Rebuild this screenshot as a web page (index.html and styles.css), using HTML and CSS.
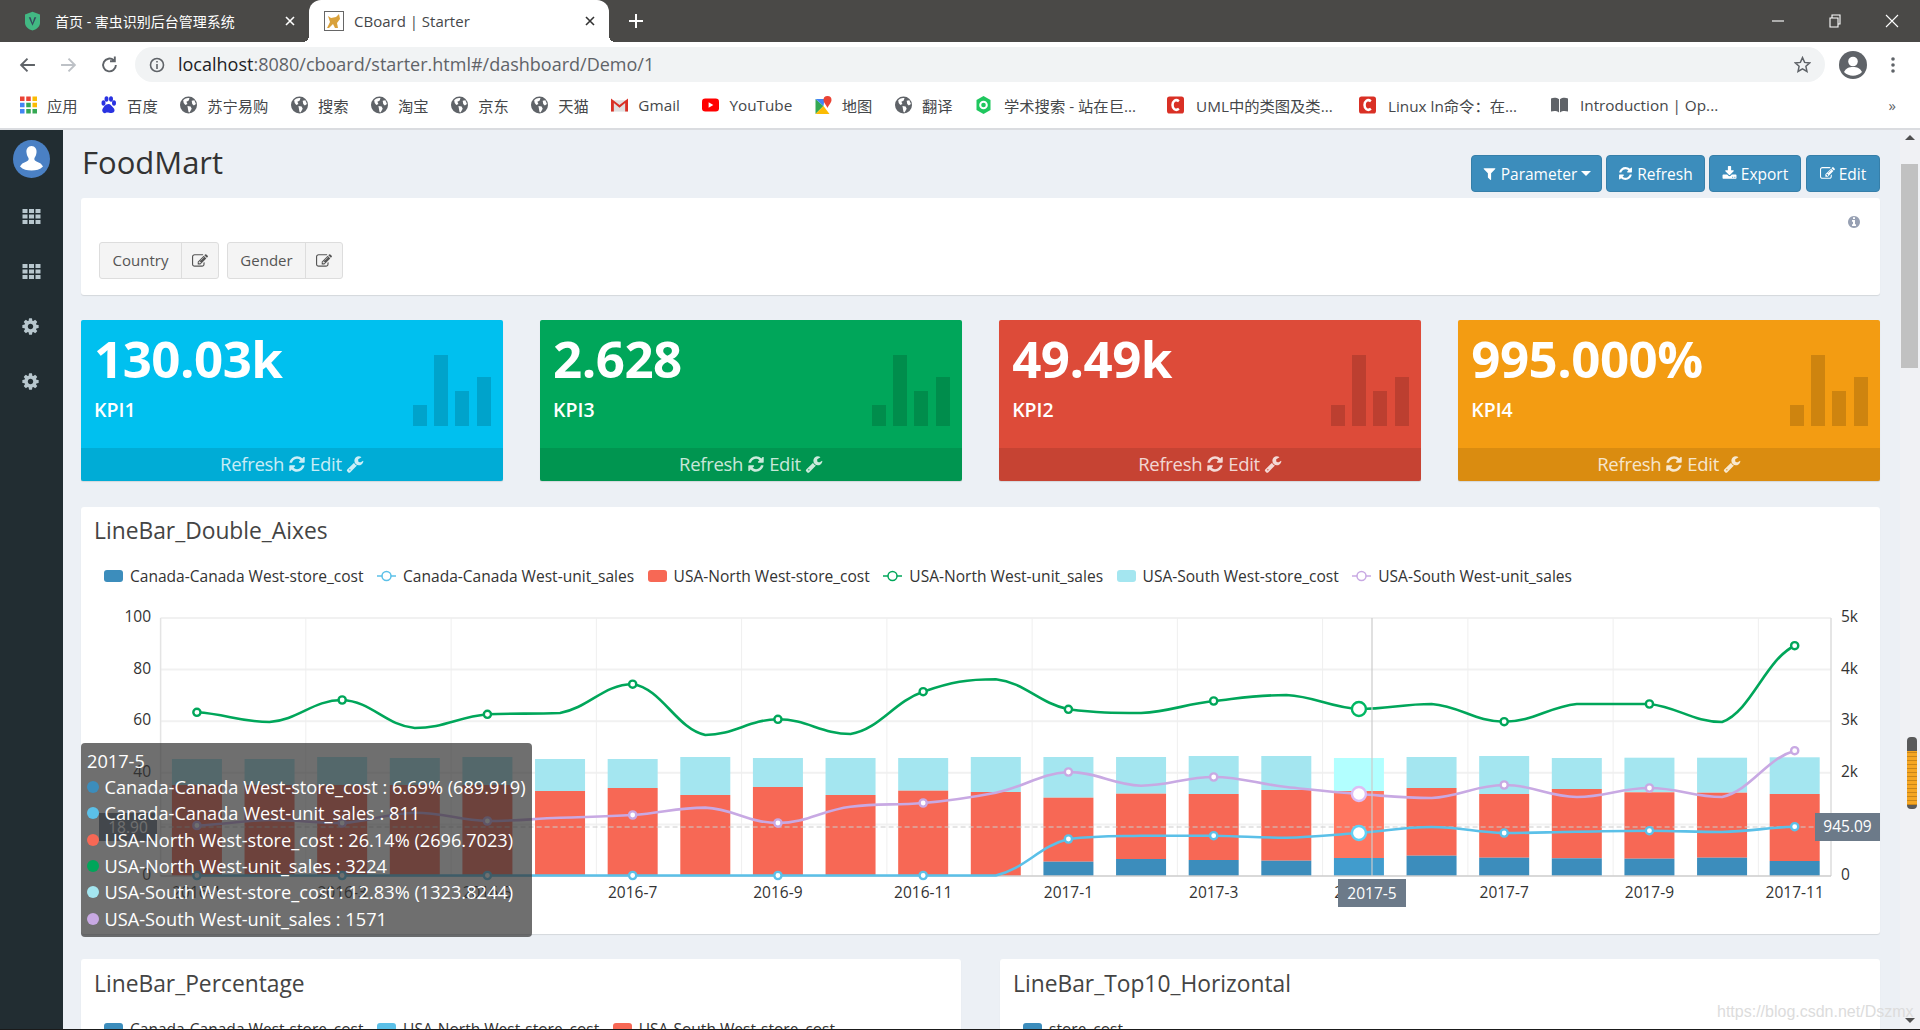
FILE: index.html
```html
<!DOCTYPE html>
<html lang="zh-CN">
<head>
<meta charset="utf-8">
<title>CBoard | Starter</title>
<link rel="stylesheet" href="styles.css">
</head>
<body>
<svg class="defs" width="0" height="0" aria-hidden="true">
  <defs>
    <symbol id="i-refresh" viewBox="0 0 1792 1792"><path d="M1639 1056q0 5-1 7-64 268-268 434.5t-478 166.5q-146 0-282.5-55t-243.5-157l-129 129q-19 19-45 19t-45-19-19-45v-448q0-26 19-45t45-19h448q26 0 45 19t19 45-19 45l-137 137q71 66 161 102t187 36q134 0 250-65t186-179q11-17 53-117 8-23 30-23h192q13 0 22.5 9.5t9.5 22.5zm25-800v448q0 26-19 45t-45 19h-448q-26 0-45-19t-19-45 19-45l138-138q-148-137-349-137-134 0-250 65t-186 179q-11 17-53 117-8 23-30 23h-199q-13 0-22.5-9.5t-9.5-22.5v-7q65-268 270-434.5t480-166.5q146 0 284 55.5t245 156.5l130-129q19-19 45-19t45 19 19 45z"/></symbol>
    <symbol id="i-wrench" viewBox="0 0 1792 1792"><path d="M448 1472q0-26-19-45t-45-19-45 19-19 45 19 45 45 19 45-19 19-45zm644-420l-682 682q-37 37-90 37-52 0-91-37l-106-108q-38-36-38-90 0-53 38-91l681-681q39 98 114.5 173.5t173.5 114.5zm634-435q0 39-23 106-47 134-164.5 217.5t-258.5 83.5q-185 0-316.5-131.5t-131.5-316.5 131.5-316.5 316.5-131.5q58 0 121.5 16.5t107.5 46.5q16 11 16 28t-16 28l-293 169v224l193 107q5-3 79-48.5t135.5-81 70.5-35.5q15 0 23.5 10t8.5 25z"/></symbol>
    <symbol id="i-filter" viewBox="0 0 1792 1792"><path d="M1595 295q17 41-14 70l-493 493v742q0 42-39 59-13 5-25 5-27 0-45-19l-256-256q-19-19-19-45v-486l-493-493q-31-29-14-70 17-39 59-39h1280q42 0 59 39z"/></symbol>
    <symbol id="i-cog" viewBox="0 0 1792 1792"><path d="M1152 896q0-106-75-181t-181-75-181 75-75 181 75 181 181 75 181-75 75-181zm512-109v222q0 12-8 23t-20 13l-185 28q-19 54-39 91 35 50 107 138 10 12 10 25t-9 23q-27 37-99 108t-94 71q-12 0-26-9l-138-108q-44 23-91 38-16 136-29 186-7 28-36 28h-222q-14 0-24.5-8.5t-11.5-21.5l-28-184q-49-16-90-37l-141 107q-10 9-25 9-14 0-25-11-126-114-165-168-7-10-7-23 0-12 8-23 15-21 51-66.5t54-70.5q-27-50-41-99l-183-27q-13-2-21-12.5t-8-23.5v-222q0-12 8-23t19-13l186-28q14-46 39-92-40-57-107-138-10-12-10-24 0-10 9-23 26-36 98.5-107.5t94.5-71.5q13 0 26 10l138 107q44-23 91-38 16-136 29-186 7-28 36-28h222q14 0 24.5 8.5t11.5 21.5l28 184q49 16 90 37l142-107q9-9 24-9 13 0 25 10 129 119 165 170 7 8 7 22 0 12-8 23-15 21-51 66.5t-54 70.5q26 50 41 98l183 28q13 2 21 12.5t8 23.5z"/></symbol>
    <symbol id="i-edit" viewBox="0 0 1792 1792"><path d="M888 1184l116-116-152-152-116 116v56h96v96h56zm440-720q-16-16-33 1l-350 350q-17 17-1 33t33-1l350-350q17-17 1-33zm80 594v190q0 119-84.5 203.5t-203.5 84.5h-832q-119 0-203.5-84.5t-84.5-203.5v-832q0-119 84.5-203.5t203.5-84.5h832q63 0 117 25 15 7 18 23 3 17-9 29l-49 49q-14 14-32 8-23-6-45-6h-832q-66 0-113 47t-47 113v832q0 66 47 113t113 47h832q66 0 113-47t47-113v-126q0-13 9-22l64-64q15-15 35-7t20 29zm-96-738l288 288-672 672h-288v-288zm444 132l-92 92-288-288 92-92q28-28 68-28t68 28l152 152q28 28 28 68t-28 68z"/></symbol>
    <symbol id="i-download" viewBox="0 0 1792 1792"><path d="M1344 1344q0-26-19-45t-45-19-45 19-19 45 19 45 45 19 45-19 19-45zm256 0q0-26-19-45t-45-19-45 19-19 45 19 45 45 19 45-19 19-45zm128-224v320q0 40-28 68t-68 28h-1472q-40 0-68-28t-28-68v-320q0-40 28-68t68-28h465l135 136q58 56 136 56t136-56l136-136h464q40 0 68 28t28 68zm-325-569q17 41-14 70l-448 448q-18 19-45 19t-45-19l-448-448q-31-29-14-70 17-39 59-39h256v-448q0-26 19-45t45-19h256q26 0 45 19t19 45v448h256q42 0 59 39z"/></symbol>
    <symbol id="i-info" viewBox="0 0 1792 1792"><path d="M1152 1376v-160q0-14-9-23t-23-9h-96v-512q0-14-9-23t-23-9h-320q-14 0-23 9t-9 23v160q0 14 9 23t23 9h96v320h-96q-14 0-23 9t-9 23v160q0 14 9 23t23 9h448q14 0 23-9t9-23zm-128-896v-160q0-14-9-23t-23-9h-192q-14 0-23 9t-9 23v160q0 14 9 23t23 9h192q14 0 23-9t9-23zm640 416q0 209-103 385.5t-279.5 279.5-385.5 103-385.5-103-279.5-279.5-103-385.5 103-385.5 279.5-279.5 385.5-103 385.5 103 279.5 279.5 103 385.5z"/></symbol>
    <symbol id="i-th" viewBox="0 0 18 15"><path d="M0 0h5v4H0zM6.5 0h5v4h-5zM13 0h5v4h-5zM0 5.500h5v4H0zM6.500 5.500h5v4h-5zM13 5.500h5v4h-5zM0 11h5v4H0zM6.500 11h5v4h-5zM13 11h5v4h-5z"/></symbol>
    <symbol id="i-globe" viewBox="0 0 16 16"><circle cx="8" cy="8" r="8" fill="#5f6368"/><path fill="#fff" d="M3 3.500c2-1.800 4-2.300 6-1.800L8 4 6 5l1 2-2 1-1.500-2zM7 9l3 .5 1 2L9 15l-1-.5zM11 4l2.500-.5L15 7l-2 1.500L11.500 7z"/></symbol>
    <symbol id="i-c" viewBox="0 0 20 20"><rect width="20" height="20" rx="3" fill="#d93025"/><path d="M14 5.500C10 2.500 6.500 5.500 6.500 10s3.500 7.500 7.500 4.500" fill="none" stroke="#fff" stroke-width="3"/></symbol>
  </defs>
</svg>

<div class="window">
  <header class="tabbar">
    <div class="tab">
      <svg class="fav" viewBox="0 0 16 20"><path fill="#42b883" d="M8 0l8 3v9c0 4-4 7-8 8-4-1-8-4-8-8V3z"/><path fill="#35495e" d="M4 6h2l2 6 2-6h2l-4 9z"/></svg>
      <span class="tab-title">首页 - 害虫识别后台管理系统</span>
      <svg class="tab-x" viewBox="0 0 10 10"><path d="M1 1l8 8M9 1l-8 8"/></svg>
    </div>
    <div class="tab tab-active">
      <svg class="fav fav-cat" viewBox="0 0 20 20"><rect x=".5" y=".5" width="19" height="19" fill="#fff" stroke="#666"/><path fill="#d9a13b" d="M4 5l3 2 5-1 3-3 1 5-3 4 1 5h-3l-2-4-4 4H3l3-6z"/></svg>
      <span class="tab-title">CBoard | Starter</span>
      <svg class="tab-x" viewBox="0 0 10 10"><path d="M1 1l8 8M9 1l-8 8"/></svg>
    </div>
    <svg class="newtab" viewBox="0 0 14 14"><path d="M7 0v14M0 7h14"/></svg>
    <div class="winctl">
      <svg viewBox="0 0 14 14"><path d="M1 7h12"/></svg>
      <svg viewBox="0 0 14 14"><path d="M2 4h8v9H2zM4 4V1h8v9h-2"/></svg>
      <svg viewBox="0 0 14 14"><path d="M1 1l12 12M13 1L1 13"/></svg>
    </div>
  </header>

  <nav class="toolbar">
    <svg class="nav-btn" viewBox="0 0 16 16"><path d="M15 8H2M8 2L2 8l6 6"/></svg>
    <svg class="nav-btn nav-off" viewBox="0 0 16 16"><path d="M1 8h13M8 2l6 6-6 6"/></svg>
    <svg class="nav-btn" viewBox="0 0 16 16"><path d="M14 8a6 6 0 1 1-2-4.500M13 0v4.500H8.500"/></svg>
    <div class="omnibox">
      <svg class="omni-info" viewBox="0 0 16 16"><circle cx="8" cy="8" r="6.500"/><path d="M8 7v5M8 4v1.500"/></svg>
      <span class="url"><b>localhost</b>:8080/cboard/starter.html#/dashboard/Demo/1</span>
      <svg class="omni-star" viewBox="0 0 16 16"><path d="M8 1.500l2 4.500 4.800.5-3.600 3.200 1 4.800L8 12l-4.200 2.500 1-4.800L1.200 6.500 6 6z"/></svg>
    </div>
    <svg class="profile" viewBox="0 0 28 28"><circle cx="14" cy="14" r="14" fill="#5f6368"/><circle cx="14" cy="10.500" r="4.800" fill="#fff"/><path fill="#fff" d="M5 21c2-4 5-5 9-5s7 1 9 5c-5 5-13 5-18 0z"/></svg>
    <svg class="dots" viewBox="0 0 4 18"><circle cx="2" cy="3" r="1.800"/><circle cx="2" cy="9" r="1.800"/><circle cx="2" cy="15" r="1.800"/></svg>
  </nav>

  <div class="bookmarks">
    <a class="bm"><svg class="bm-ic" viewBox="0 0 15 15"><rect width="4" height="4" fill="#ea4335"/><rect x="5.500" width="4" height="4" fill="#ea4335"/><rect x="11" width="4" height="4" fill="#fbbc04"/><rect y="5.500" width="4" height="4" fill="#4285f4"/><rect x="5.500" y="5.500" width="4" height="4" fill="#34a853"/><rect x="11" y="5.500" width="4" height="4" fill="#fbbc04"/><rect y="11" width="4" height="4" fill="#4285f4"/><rect x="5.500" y="11" width="4" height="4" fill="#34a853"/><rect x="11" y="11" width="4" height="4" fill="#34a853"/></svg>应用</a>
    <a class="bm"><svg class="bm-ic" viewBox="0 0 16 18"><g fill="#2932e1"><ellipse cx="3" cy="7" rx="2" ry="2.800"/><ellipse cx="6" cy="3" rx="2" ry="2.800"/><ellipse cx="10.500" cy="3" rx="2" ry="2.800"/><ellipse cx="13.500" cy="7" rx="2" ry="2.800"/><path d="M8 8c2 0 3 2 5 4s1 5-2 5-4-1-6 0-4-2-3-4 3-5 6-5z"/></g></svg>百度</a>
    <a class="bm"><svg class="bm-ic"><use href="#i-globe"/></svg>苏宁易购</a>
    <a class="bm"><svg class="bm-ic"><use href="#i-globe"/></svg>搜索</a>
    <a class="bm"><svg class="bm-ic"><use href="#i-globe"/></svg>淘宝</a>
    <a class="bm"><svg class="bm-ic"><use href="#i-globe"/></svg>京东</a>
    <a class="bm"><svg class="bm-ic"><use href="#i-globe"/></svg>天猫</a>
    <a class="bm"><svg class="bm-ic" viewBox="0 0 18 14"><path fill="#e0e0e0" d="M0 2h18v12H0z"/><path fill="#d93025" d="M0 0l9 7 9-7v14h-3V5L9 10 3 5v9H0z"/></svg>Gmail</a>
    <a class="bm"><svg class="bm-ic" viewBox="0 0 18 14"><rect width="18" height="14" rx="3.500" fill="#f00"/><path fill="#fff" d="M7 4l5 3-5 3z"/></svg>YouTube</a>
    <a class="bm"><svg class="bm-ic" viewBox="0 0 16 18"><path fill="#34a853" d="M0 3l8 7-8 8z"/><path fill="#fbbc04" d="M0 18l8-8 6 8z"/><path fill="#4285f4" d="M0 3h9l-1 7z"/><path fill="#ea4335" d="M12 0a4 4 0 0 1 4 4c0 3-3 5-4 8-1-3-4-5-4-8a4 4 0 0 1 4-4z"/></svg>地图</a>
    <a class="bm"><svg class="bm-ic"><use href="#i-globe"/></svg>翻译</a>
    <a class="bm bm-fixed"><svg class="bm-ic" viewBox="0 0 14 18"><path fill="#1fc75e" d="M7 0l7 4v10l-7 4-7-4V4z"/><circle cx="7" cy="9" r="3.300" fill="none" stroke="#fff" stroke-width="2"/></svg>学术搜索 - 站在巨...</a>
    <a class="bm bm-fixed"><svg class="bm-ic"><use href="#i-c"/></svg>UML中的类图及类...</a>
    <a class="bm bm-fixed"><svg class="bm-ic"><use href="#i-c"/></svg>Linux ln命令：在...</a>
    <a class="bm bm-fixed"><svg class="bm-ic" viewBox="0 0 18 18"><path fill="#5f6368" d="M0 2c3-1 6-1 8.500 1v14C6 15 3 15 0 16zM18 2c-3-1-6-1-8.500 1v14c2.500-2 5.500-2 8.500-1z"/></svg>Introduction | Op...</a>
    <span class="bm-more">»</span>
  </div>

  <div class="app">
    <aside class="sidebar">
      <svg class="avatar" viewBox="0 0 37 38"><ellipse cx="18.500" cy="19" rx="18.500" ry="19" fill="#4a80c4"/><path fill="#fff" d="M18.500 6c3.500 0 5.500 3 5 6.500-.3 2.500-1 4-2 5.500-.5 1.500 0 2.500 2 3.500 3 1.300 5 2 6.500 5-3 3-7 4-11.500 4s-8.500-1-11.500-4c1.500-3 3.500-3.700 6.500-5 2-1 2.500-2 2-3.500-1-1.500-1.700-3-2-5.500-.5-3.500 1.500-6.500 5-6.500z"/></svg>
      <a class="side-item"><svg class="side-th"><use href="#i-th"/></svg></a>
      <a class="side-item"><svg class="side-th"><use href="#i-th"/></svg></a>
      <a class="side-item"><svg class="side-cog"><use href="#i-cog"/></svg></a>
      <a class="side-item"><svg class="side-cog"><use href="#i-cog"/></svg></a>
    </aside>

    <main class="content">
      <div class="page-head">
        <h1 class="page-title">FoodMart</h1>
        <div class="actions">
          <button class="btn btn-param"><svg class="ic"><use href="#i-filter"/></svg>Parameter<span class="caret"></span></button>
          <button class="btn btn-refresh"><svg class="ic"><use href="#i-refresh"/></svg>Refresh</button>
          <button class="btn btn-export"><svg class="ic"><use href="#i-download"/></svg>Export</button>
          <button class="btn btn-edit"><svg class="ic"><use href="#i-edit"/></svg>Edit</button>
        </div>
      </div>

      <section class="filter-box">
        <svg class="info"><use href="#i-info"/></svg>
        <div class="param"><span class="param-name param-country">Country</span><span class="param-edit"><svg class="ic-edit"><use href="#i-edit"/></svg></span></div>
        <div class="param"><span class="param-name param-gender">Gender</span><span class="param-edit"><svg class="ic-edit"><use href="#i-edit"/></svg></span></div>
      </section>

      <section class="kpis">
        <article class="kpi kpi-blue">
          <div class="kpi-body"><h3 class="kpi-value">130.03k</h3><p class="kpi-name">KPI1</p>
            <svg class="kpi-icon" viewBox="0 0 78 71"><path d="M0 50h14v21H0zM21 0h14v71H21zM42 36h14v35H42zM64 22h14v49H64z"/></svg></div>
          <div class="kpi-foot">Refresh <svg class="ic-f"><use href="#i-refresh"/></svg> Edit <svg class="ic-f"><use href="#i-wrench"/></svg></div>
        </article>
        <article class="kpi kpi-green">
          <div class="kpi-body"><h3 class="kpi-value">2.628</h3><p class="kpi-name">KPI3</p>
            <svg class="kpi-icon" viewBox="0 0 78 71"><path d="M0 50h14v21H0zM21 0h14v71H21zM42 36h14v35H42zM64 22h14v49H64z"/></svg></div>
          <div class="kpi-foot">Refresh <svg class="ic-f"><use href="#i-refresh"/></svg> Edit <svg class="ic-f"><use href="#i-wrench"/></svg></div>
        </article>
        <article class="kpi kpi-red">
          <div class="kpi-body"><h3 class="kpi-value">49.49k</h3><p class="kpi-name">KPI2</p>
            <svg class="kpi-icon" viewBox="0 0 78 71"><path d="M0 50h14v21H0zM21 0h14v71H21zM42 36h14v35H42zM64 22h14v49H64z"/></svg></div>
          <div class="kpi-foot">Refresh <svg class="ic-f"><use href="#i-refresh"/></svg> Edit <svg class="ic-f"><use href="#i-wrench"/></svg></div>
        </article>
        <article class="kpi kpi-orange">
          <div class="kpi-body"><h3 class="kpi-value">995.000%</h3><p class="kpi-name">KPI4</p>
            <svg class="kpi-icon" viewBox="0 0 78 71"><path d="M0 50h14v21H0zM21 0h14v71H21zM42 36h14v35H42zM64 22h14v49H64z"/></svg></div>
          <div class="kpi-foot">Refresh <svg class="ic-f"><use href="#i-refresh"/></svg> Edit <svg class="ic-f"><use href="#i-wrench"/></svg></div>
        </article>
      </section>

      <section class="card chart-card">
        <h3 class="card-title">LineBar_Double_Aixes</h3>
        <div class="legend">
          <span class="lg"><i class="sw sw-blue"></i>Canada-Canada West-store_cost</span>
          <span class="lg"><svg class="lg-line ln-sky" viewBox="0 0 19 12"><path d="M0 6h19"/><circle cx="9.500" cy="6" r="4.500"/></svg>Canada-Canada West-unit_sales</span>
          <span class="lg"><i class="sw sw-red"></i>USA-North West-store_cost</span>
          <span class="lg"><svg class="lg-line ln-green" viewBox="0 0 19 12"><path d="M0 6h19"/><circle cx="9.500" cy="6" r="4.500"/></svg>USA-North West-unit_sales</span>
          <span class="lg"><i class="sw sw-cyan"></i>USA-South West-store_cost</span>
          <span class="lg"><svg class="lg-line ln-purple" viewBox="0 0 19 12"><path d="M0 6h19"/><circle cx="9.500" cy="6" r="4.500"/></svg>USA-South West-unit_sales</span>
        </div>
        <svg id="chart" class="chart" viewBox="81 597 1799 337" width="1799" height="337"></svg>
        <div class="tooltip">
          <div class="tt-head">2017-5</div>
          <div class="tt-row"><i class="dot sw-blue"></i>Canada-Canada West-store_cost : 6.69% (689.919)</div>
          <div class="tt-row"><i class="dot sw-sky"></i>Canada-Canada West-unit_sales : 811</div>
          <div class="tt-row"><i class="dot sw-red"></i>USA-North West-store_cost : 26.14% (2696.7023)</div>
          <div class="tt-row"><i class="dot sw-green"></i>USA-North West-unit_sales : 3224</div>
          <div class="tt-row"><i class="dot sw-cyan"></i>USA-South West-store_cost : 12.83% (1323.8244)</div>
          <div class="tt-row"><i class="dot sw-purple"></i>USA-South West-unit_sales : 1571</div>
        </div>
      </section>

      <section class="row-two">
        <div class="card">
          <h3 class="card-title">LineBar_Percentage</h3>
          <div class="legend">
            <span class="lg"><i class="sw sw-blue"></i>Canada-Canada West-store_cost</span>
            <span class="lg"><i class="sw sw-sky"></i>USA-North West-store_cost</span>
            <span class="lg"><i class="sw sw-red"></i>USA-South West-store_cost</span>
          </div>
        </div>
        <div class="card">
          <h3 class="card-title">LineBar_Top10_Horizontal</h3>
          <div class="legend">
            <span class="lg"><i class="sw sw-blue"></i>store_cost</span>
          </div>
        </div>
      </section>
    </main>

    <div class="scrollbar">
      <span class="arrow-up"></span>
      <span class="thumb"></span>
      <span class="arrow-down"></span>
    </div>
    <div class="mini-scroll"></div>
    <div class="watermark">https://blog.csdn.net/Dszmx</div>
  </div>
  <div class="edge"></div>
</div>
<script src="chart.js"></script>
</body>
</html>
```
FILE: styles.css
```css
* { box-sizing: border-box; }
html, body { margin: 0; padding: 0; height: 100%; overflow: hidden; }
body { font-family: "Open Sans", "Noto Sans CJK SC", sans-serif; color: #333; background: #fff; }
.defs { position: absolute; }
svg { display: block; }

.window { height: 1030px; display: flex; flex-direction: column; }

/* browser tabs */
.tabbar { height: 42px; flex: none; background: #4a4947; display: flex; align-items: stretch; color: #fff; }
.tab { width: 300px; margin-left: 9px; display: flex; align-items: center; padding: 0 14px 0 16px; font-size: 14px; position: relative; }
.tab-active { background: #fff; color: #45474a; border-radius: 12px 12px 0 0; margin-left: 0; padding-left: 15px; font-size: 15px; }
.tab-active::before, .tab-active::after { content: ""; position: absolute; bottom: 0; width: 6px; height: 6px; }
.tab-active::before { left: -6px; background: radial-gradient(circle at 0 0, transparent 6px, #fff 6px); }
.tab-active::after { right: -6px; background: radial-gradient(circle at 100% 0, transparent 6px, #fff 6px); }
.fav { width: 15px; height: 20px; flex: none; margin-right: 15px; }
.fav-cat { width: 20px; margin-right: 10px; }
.tab-title { flex: 1; white-space: nowrap; }
.tab-x { width: 10px; height: 12px; fill: none; stroke: #fff; stroke-width: 1.6; }
.tab-active .tab-x { stroke: #333; }
.newtab { width: 14px; height: 16px; margin: 13px 0 0 20px; fill: none; stroke: #fff; stroke-width: 2; }
.winctl { margin-left: auto; display: flex; gap: 43px; padding: 12px 21px 0 0; }
.winctl svg { width: 14px; height: 18px; fill: none; stroke: #fff; stroke-width: 1.1; }

/* toolbar */
.toolbar { height: 42px; flex: none; background: #fff; display: flex; align-items: center; padding: 3px 0 0 19px; }
.nav-btn { width: 17px; height: 18px; margin-right: 24px; fill: none; stroke: #5f6368; stroke-width: 1.8; flex: none; }
.nav-off { stroke: #bdc1c6; }
.omnibox { width: 1690px; height: 35px; margin-left: -7px; border-radius: 18px; background: #f1f3f4; display: flex; align-items: center; padding: 0 14px 0 14px; flex: none; }
.omni-info { width: 16px; height: 16px; fill: none; stroke: #5f6368; stroke-width: 1.6; flex: none; margin-right: 13px; }
.url { font-size: 18px; color: #5f6368; white-space: nowrap; flex: 1; padding-bottom: 2px; }
.url b { font-weight: 400; color: #202124; }
.omni-star { width: 17px; height: 17px; fill: none; stroke: #5f6368; stroke-width: 1.4; }
.profile { width: 28px; height: 28px; margin-left: 14px; flex: none; }
.dots { width: 4px; height: 18px; margin-left: 24px; fill: #5f6368; flex: none; }

/* bookmarks */
.bookmarks { height: 46px; flex: none; background: #fff; border-bottom: 2px solid #dadce0; display: flex; align-items: center; gap: 22.500px; padding: 0 0 2px 20px; font-size: 15.300px; color: #45474a; white-space: nowrap; }
.bm { display: flex; align-items: center; gap: 10px; }
.bm-fixed { width: 169.500px; flex: none; gap: 12px; }
.bm-ic { width: 17px; height: 18px; flex: none; }
.bm-more { margin-left: auto; padding-right: 24px; font-size: 15px; color: #5f6368; }

/* app */
.app { flex: 1; min-height: 0; display: flex; background: #ecf0f5; position: relative; overflow: hidden; }
.sidebar { width: 63px; flex: none; background: #222d32; display: flex; flex-direction: column; align-items: center; padding-top: 10px; }
.avatar { width: 37px; height: 38px; margin-bottom: 11px; }
.side-item { height: 55px; width: 100%; display: flex; align-items: center; justify-content: center; flex: none; }
.side-th { width: 19px; height: 15px; fill: #b8c7ce; }
.side-cog { width: 19px; height: 19px; fill: #b8c7ce; margin-right: 3px; }

.content { flex: 1; min-width: 0; padding: 0 20px 0 18px; overflow: hidden; }
.page-head { height: 68px; display: flex; justify-content: space-between; align-items: flex-start; }
.page-title { margin: 10px 0 0 1px; font-size: 31px; line-height: 44px; font-weight: 400; color: #333; }
.actions { display: flex; gap: 4px; margin-top: 25px; }
.btn { height: 37px; padding: 0; border: 1px solid #367fa9; border-radius: 4px; background: #3c8dbc; color: #fff; font: 400 15.500px "Open Sans", sans-serif; display: flex; align-items: center; justify-content: center; gap: 4px; }
.btn-param { width: 131px; }
.btn-refresh { width: 99px; }
.btn-export { width: 92px; }
.btn-edit { width: 74px; margin-left: 1px; }
.ic { width: 15px; height: 15px; fill: #fff; }
.caret { width: 0; height: 0; border: 5px solid transparent; border-top-color: #fff; border-bottom: 0; }

.filter-box { height: 97px; background: #fff; border-radius: 3px; box-shadow: 0 1px 1px rgba(0,0,0,.1); display: flex; align-items: flex-end; gap: 8px; padding: 0 0 16px 18px; position: relative; }
.info { position: absolute; right: 19px; top: 17px; width: 14px; height: 14px; fill: #97a0b3; }
.param { height: 37px; display: flex; background: #f4f4f4; border: 1px solid #ddd; border-radius: 3px; font-size: 15px; color: #555; }
.param-name { display: flex; align-items: center; justify-content: center; border-right: 1px solid #ddd; padding-bottom: 2px; }
.param-country { width: 82px; }
.param-gender { width: 78px; }
.param-edit { width: 36px; display: flex; align-items: center; justify-content: center; }
.ic-edit { width: 16px; height: 16px; fill: #555; }

.kpis { display: grid; grid-template-columns: repeat(4, 1fr); gap: 37.330px; margin-top: 25px; }
.kpi { height: 161px; border-radius: 2px; color: #fff; display: flex; flex-direction: column; box-shadow: 0 1px 1px rgba(0,0,0,.1); }
.kpi-body { flex: 1; position: relative; padding: 10px 13px 0; }
.kpi-value { margin: 0; font-size: 51px; line-height: 56px; font-weight: 700; letter-spacing: -.5px; white-space: nowrap; }
.kpi-name { margin: 12px 0 0; font-size: 19.500px; line-height: 24px; font-weight: 600; }
.kpi-icon { position: absolute; right: 12px; top: 35px; width: 78px; height: 71px; fill: rgba(0,0,0,.15); }
.kpi-foot { height: 33px; background: rgba(0,0,0,.1); color: rgba(255,255,255,.8); font-size: 18.500px; display: flex; align-items: center; justify-content: center; gap: 4px; letter-spacing: -.3px; padding-bottom: 2px; }
.ic-f { width: 18px; height: 18px; fill: rgba(255,255,255,.8); }
.kpi-blue { background: #00c0ef; }
.kpi-green { background: #00a65a; }
.kpi-red { background: #dd4b39; }
.kpi-orange { background: #f39c12; }

.card { background: #fff; border-radius: 3px; box-shadow: 0 1px 1px rgba(0,0,0,.1); position: relative; }
.chart-card { margin-top: 26px; height: 427px; }
.card-title { margin: 0; padding-left: 13px; font-size: 22.800px; line-height: 48px; font-weight: 400; color: #444; }
.legend { height: 42px; display: flex; align-items: center; gap: 13.500px; padding-left: 23px; font-size: 15.550px; color: #333; white-space: nowrap; }
.lg { display: flex; align-items: center; gap: 7px; }
.sw { width: 19px; height: 12px; border-radius: 3px; display: block; }
.sw-blue { background: #3c8dbc; }
.sw-red { background: #f76855; }
.sw-cyan { background: #a4e6f0; }
.sw-sky { background: #5bc0e8; }
.sw-green { background: #00a65a; }
.sw-purple { background: #c8a9e3; }
.lg-line { width: 19px; height: 12px; fill: #fff; stroke-width: 1.5; overflow: visible; }
.ln-sky { stroke: #5bc0e8; }
.ln-green { stroke: #00a65a; }
.ln-purple { stroke: #c8a9e3; }
.chart { display: block; overflow: visible; font-family: "Open Sans", sans-serif; }
.ax-text { font-size: 15.500px; fill: #333; }
.ptr-text { font-size: 15.500px; fill: #fff; }

.tooltip { position: absolute; left: 0; top: 236px; width: 451px; height: 194px; background: rgba(50,50,50,.7); border-radius: 4px; color: #fff; font-size: 18.200px; padding: 5px 6px 0; white-space: nowrap; z-index: 2; }
.tt-head, .tt-row { height: 26px; line-height: 26px; display: flex; align-items: center; }
.tt-row { height: 26.300px; }
.dot { width: 12px; height: 12px; border-radius: 50%; margin-right: 5.500px; flex: none; }

.row-two { display: grid; grid-template-columns: 1fr 1fr; gap: 39px; margin-top: 25px; }
.row-two .card { height: 400px; }
.row-two .card-title { line-height: 50px; }
.row-two .legend { height: 40px; }

/* scrollbars and overlays */
.scrollbar { width: 20px; flex: none; background: #f0f1f4; position: relative; padding: 34px 2px 0 1px; }
.thumb { display: block; height: 204px; background: #c1c1c1; }
.arrow-up, .arrow-down { position: absolute; left: 5px; width: 0; height: 0; border: 5px solid transparent; }
.arrow-up { top: 5px; border-bottom-color: #505050; border-top: 0; }
.arrow-down { bottom: 6px; border-top-color: #505050; border-bottom: 0; }
.mini-scroll { position: absolute; left: 1907px; top: 607px; width: 10px; height: 72px; border-radius: 4px; background: linear-gradient(#5a5a5a 0 14px, transparent 14px calc(100% - 4px), #5a5a5a calc(100% - 4px)), repeating-linear-gradient(#f5a623 0 3px, #c9861a 3px 4px); }
.watermark { position: absolute; left: 1717px; top: 871px; font: 16px/22px "Liberation Sans", sans-serif; color: #dcdcdc; white-space: nowrap; }
.edge { height: 1px; flex: none; background: #1a1a1a; }
```
FILE: chart.js
```js
(function () {
  var NS = 'http://www.w3.org/2000/svg';
  var svg = document.getElementById('chart');
  var L = 160.6, R = 1831, T = 618, B = 876, N = 23;
  var step = (R - L) / N;

  function el(name, attrs, text) {
    var e = document.createElementNS(NS, name);
    for (var k in attrs) e.setAttribute(k, attrs[k]);
    if (text != null) e.textContent = text;
    svg.appendChild(e);
    return e;
  }
  function cx(i) { return L + step * (i + 0.5); }
  function clamp(v, a, b) { return Math.max(Math.min(a, b), Math.min(Math.max(a, b), v)); }

  var cyan = [759, 759, 757, 758, 757, 759, 759, 757, 758, 758, 758, 757, 757, 757, 756, 756, 758, 757, 756, 758, 757.700, 757.700, 757.300];
  var red = [785, 785, 785, 785, 785, 791, 788, 795, 787, 795, 790.700, 792, 797.700, 793.700, 794, 790, 791, 788, 794, 789, 792.300, 792.700, 794];
  var blue = [876, 876, 876, 876, 876, 876, 876, 876, 876, 876, 876, 876, 861.700, 859, 860, 860.700, 858, 855.700, 857.700, 858.300, 858.700, 857.700, 861];
  var green = [712.300, 722, 700, 728, 714.300, 713, 684.200, 735, 719.300, 734, 691.700, 679.300, 709.300, 713, 701, 695, 709, 704, 721.700, 704, 704, 722, 645.700];
  var purple = [825.500, 820, 823, 812.700, 821, 817.800, 815, 807.600, 823, 806.700, 803, 792.700, 772, 785.700, 777, 787, 794, 798, 785, 797, 788, 797, 750.700];
  var sky = [875.500, 875.500, 875.500, 875.500, 875.500, 875.500, 875.500, 875.500, 875.500, 875.500, 875.500, 875.500, 839, 835.700, 835.700, 837.700, 833, 827, 833, 831.700, 830.700, 832, 826.700];

  // grid
  [T, 669.600, 721.200, 772.800, 824.400].forEach(function (y) {
    el('line', { x1: L, x2: R, y1: y, y2: y, stroke: '#f1f1f1', 'stroke-width': 2 });
  });
  for (var v = 0; v <= N; v += 2) {
    var gx = L + v * step;
    el('line', { x1: gx, x2: gx, y1: T, y2: B, stroke: '#efefef', 'stroke-width': 1 });
  }

  // bars
  for (var i = 0; i < N; i++) {
    var hi = i === 16, x = cx(i) - 25;
    el('rect', { x: x, y: cyan[i], width: 50, height: red[i] - cyan[i], fill: hi ? '#b2ffff' : '#a4e6f0' });
    el('rect', { x: x, y: red[i], width: 50, height: blue[i] - red[i], fill: hi ? '#ff755f' : '#f76855' });
    if (blue[i] < B) el('rect', { x: x, y: blue[i], width: 50, height: B - blue[i], fill: hi ? '#419ccd' : '#3c8dbc' });
  }

  // axes
  el('line', { x1: L, x2: L, y1: T, y2: B, stroke: '#e4e4e4', 'stroke-width': 1.500 });
  el('line', { x1: R, x2: R, y1: T, y2: B, stroke: '#dcdcdc', 'stroke-width': 1.500 });
  el('line', { x1: L, x2: R, y1: B, y2: B, stroke: '#ccc', 'stroke-width': 1.500 });

  // axis pointers under the series
  el('line', { x1: L, x2: 1815, y1: 827, y2: 827, stroke: '#ccc', 'stroke-width': 1.200, 'stroke-dasharray': '5 3' });

  function smooth(data) {
    var d = 'M' + cx(0) + ' ' + data[0];
    for (var i = 0; i < N - 1; i++) {
      var p0 = data[Math.max(i - 1, 0)], p1 = data[i], p2 = data[i + 1], p3 = data[Math.min(i + 2, N - 1)];
      var c1y = clamp(p1 + (p2 - p0) * 0.18, p1, p2), c2y = clamp(p2 - (p3 - p1) * 0.18, p1, p2);
      d += 'C' + (cx(i) + step * 0.4) + ' ' + c1y + ' ' + (cx(i + 1) - step * 0.4) + ' ' + c2y + ' ' + cx(i + 1) + ' ' + data[i + 1];
    }
    return d;
  }
  function series(data, color, hiColor) {
    el('path', { d: smooth(data), fill: 'none', stroke: color, 'stroke-width': 2.600 });
    for (var i = 0; i < N; i += 2) {
      el('circle', { cx: cx(i), cy: data[i], r: 3.600, fill: '#fff', stroke: color, 'stroke-width': 2.400 });
    }
    el('circle', { cx: cx(16), cy: data[16], r: 7, fill: '#fff', stroke: hiColor, 'stroke-width': 2.400 });
  }
  series(sky, '#5bc0e8', '#5fd0f5');
  series(green, '#00a65a', '#00b763');
  series(purple, '#c8a9e3', '#dcbdf5');

  // vertical pointer
  el('line', { x1: 1372, x2: 1372, y1: T, y2: B, stroke: '#ccc', 'stroke-width': 1.200 });

  // y axis labels
  ['100', '80', '60', '40', '20', '0'].forEach(function (t, i) {
    el('text', { x: 151, y: T + i * 51.600 + 4, 'text-anchor': 'end', class: 'ax-text' }, t);
  });
  ['5k', '4k', '3k', '2k', '1k', '0'].forEach(function (t, i) {
    if (t === '1k') return;
    el('text', { x: 1841, y: T + i * 51.600 + 4, class: 'ax-text' }, t);
  });

  // x axis labels
  ['2016-1', '2016-3', '2016-5', '2016-7', '2016-9', '2016-11', '2017-1', '2017-3', '2017-5', '2017-7', '2017-9', '2017-11'].forEach(function (t, i) {
    el('text', { x: cx(i * 2), y: 898, 'text-anchor': 'middle', class: 'ax-text' }, t);
  });

  // pointer labels
  el('rect', { x: 99, y: 813, width: 58, height: 28, fill: '#6c7a89' });
  el('text', { x: 128, y: 833, 'text-anchor': 'middle', class: 'ptr-text' }, '18.90');
  el('rect', { x: 1815, y: 813, width: 65, height: 28, fill: '#6c7a89' });
  el('text', { x: 1847.500, y: 832, 'text-anchor': 'middle', class: 'ptr-text' }, '945.09');
  el('rect', { x: 1338, y: 879, width: 68, height: 28, fill: '#6c7a89' });
  el('text', { x: 1372, y: 899, 'text-anchor': 'middle', class: 'ptr-text' }, '2017-5');
})();
```
